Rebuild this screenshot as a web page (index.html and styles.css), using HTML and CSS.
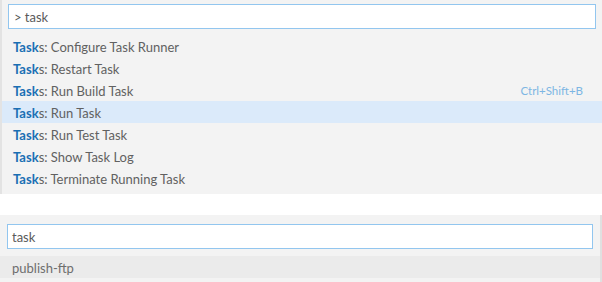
FILE: index.html
```html
<!DOCTYPE html>
<html>
<head>
<meta charset="utf-8">
<link rel="stylesheet" href="styles.css">
</head>
<body>
<div class="panel top">
  <div class="input">&gt; task</div>
  <ul class="list">
    <li class="row"><span class="label"><b>Task</b>s: Configure Task Runner</span></li>
    <li class="row"><span class="label"><b>Task</b>s: Restart Task</span></li>
    <li class="row"><span class="label"><b>Task</b>s: Run Build Task</span><span class="key">Ctrl+Shift+B</span></li>
    <li class="row selected"><span class="label"><b>Task</b>s: Run Task</span></li>
    <li class="row"><span class="label"><b>Task</b>s: Run Test Task</span></li>
    <li class="row"><span class="label"><b>Task</b>s: Show Task Log</span></li>
    <li class="row"><span class="label"><b>Task</b>s: Terminate Running Task</span></li>
  </ul>
</div>
<div class="gap"></div>
<div class="panel bottom">
  <div class="input input2">task</div>
  <ul class="list list2">
    <li class="row row2"><span class="label">publish-ftp</span></li>
  </ul>
</div>
</body>
</html>
```
FILE: styles.css
```css
html, body {
  margin: 0;
  padding: 0;
  background: #ffffff;
  font-family: "Lato", "Noto Sans", sans-serif;
  font-size: 13px;
  color: #616161;
  width: 602px;
  height: 282px;
  overflow: hidden;
}
.panel {
  background: #f3f3f3;
  box-sizing: border-box;
}
.top {
  height: 194px;
  padding: 4px 6px 0 6px;
  border-left: 2px solid #e3e3e3;
}
.input {
  box-sizing: border-box;
  height: 25px;
  background: #ffffff;
  border: 1px solid #92c6ef;
  padding: 1px 0 0 5px;
  line-height: 22px;
  color: #5a5a5a;
}
.list {
  list-style: none;
  margin: 6px -6px 0 -6px;
  padding: 0;
}
.row {
  height: 22px;
  line-height: 20px;
  padding: 0 19px 0 11px;
  display: flex;
  justify-content: space-between;
  align-items: center;
  white-space: nowrap;
}
.label, .key {
  padding-top: 2px;
}
.row b {
  color: #1a6fb3;
  font-weight: 700;
}
.selected {
  background: #dbeafa;
}
.key {
  font-size: 11.5px;
  color: #7db6e3;
}
.gap {
  height: 21px;
}
.bottom {
  height: 67px;
  padding: 9px 7px 0 7px;
  border-right: 2px solid #e0e0e0;
}
.input2 {
  padding-left: 4px;
}
.list2 {
  margin: 7px -7px 0 -7px;
}
.row2 {
  background: #ebebeb;
  padding-left: 12px;
  color: #6e6e6e;
}
```
